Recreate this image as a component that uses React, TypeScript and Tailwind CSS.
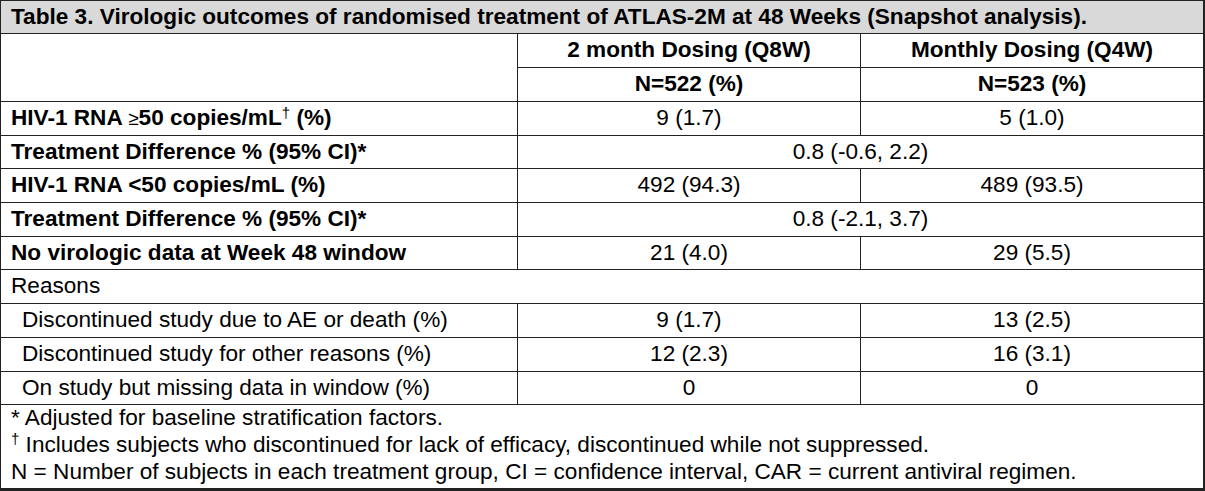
import React from "react";

const F = { fontFamily: '"Liberation Sans", Arial, Helvetica, sans-serif' };

function Dagger() {
  return <span className="inline-block text-[15px] leading-none relative -top-[7px] font-normal">†</span>;
}

function Row({
  h,
  label,
  bold,
  indent,
  a,
  b,
  merged,
}: {
  h: string;
  label: React.ReactNode;
  bold?: boolean;
  indent?: boolean;
  a?: string;
  b?: string;
  merged?: string;
}) {
  return (
    <div className={`flex ${h} shrink-0 border-b border-[#222]`}>
      <div
        className={`w-[517px] shrink-0 border-r border-[#222] flex items-center ${indent ? "pl-[21px]" : "pl-[10px]"} ${bold ? "font-bold" : ""}`}
      >
        {label}
      </div>
      {merged !== undefined ? (
        <div className="flex-1 flex items-center justify-center">{merged}</div>
      ) : (
        <>
          <div className="w-[343px] shrink-0 border-r border-[#222] flex items-center justify-center">
            {a}
          </div>
          <div className="flex-1 flex items-center justify-center">{b}</div>
        </>
      )}
    </div>
  );
}

export default function App() {
  return (
    <div
      style={F}
      className="w-[1205px] h-[491px] bg-white text-black text-[22.6px] leading-none border-t border-l border-r-2 border-b-[3px] border-[#222] flex flex-col box-border"
    >
      <div className="h-[33px] shrink-0 bg-[#d9d9d9] border-b border-[#222] flex items-center pl-[10px] font-bold whitespace-nowrap">
        Table 3. Virologic outcomes of randomised treatment of ATLAS-2M at 48 Weeks (Snapshot analysis).
      </div>
      <div className="flex h-[68px] shrink-0 border-b border-[#222]">
        <div className="w-[517px] shrink-0 border-r border-[#222]" />
        <div className="flex-1 flex flex-col font-bold">
          <div className="flex h-[34px] border-b border-[#222]">
            <div className="w-[343px] shrink-0 border-r border-[#222] flex items-center justify-center">
              2 month Dosing (Q8W)
            </div>
            <div className="flex-1 flex items-center justify-center">Monthly Dosing (Q4W)</div>
          </div>
          <div className="flex flex-1">
            <div className="w-[343px] shrink-0 border-r border-[#222] flex items-center justify-center">
              N=522 (%)
            </div>
            <div className="flex-1 flex items-center justify-center">N=523 (%)</div>
          </div>
        </div>
      </div>
      <Row
        h="h-[34px]"
        bold
        label={
          <span className="whitespace-nowrap">
            HIV-1 RNA <span className="font-normal text-[19px]">≥</span>50 copies/mL
            <Dagger /> (%)
          </span>
        }
        a="9 (1.7)"
        b="5 (1.0)"
      />
      <Row h="h-[33px]" bold label="Treatment Difference % (95% CI)*" merged="0.8 (-0.6, 2.2)" />
      <Row h="h-[34px]" bold label="HIV-1 RNA <50 copies/mL (%)" a="492 (94.3)" b="489 (93.5)" />
      <Row h="h-[34px]" bold label="Treatment Difference % (95% CI)*" merged="0.8 (-2.1, 3.7)" />
      <Row h="h-[33px]" bold label="No virologic data at Week 48 window" a="21 (4.0)" b="29 (5.5)" />
      <div className="h-[34px] shrink-0 border-b border-[#222] flex items-center pl-[10px]">Reasons</div>
      <Row h="h-[34px]" indent label="Discontinued study due to AE or death (%)" a="9 (1.7)" b="13 (2.5)" />
      <Row h="h-[34px]" indent label="Discontinued study for other reasons (%)" a="12 (2.3)" b="16 (3.1)" />
      <Row h="h-[33px]" indent label="On study but missing data in window (%)" a="0" b="0" />
      <div className="flex-1 flex flex-col pl-[10px] whitespace-nowrap">
        <div className="h-[27px] flex items-center">* Adjusted for baseline stratification factors.</div>
        <div className="h-[27px] flex items-center">
          <Dagger />
          <span>&nbsp;Includes subjects who discontinued for lack of efficacy, discontinued while not suppressed.</span>
        </div>
        <div className="h-[27px] flex items-center">
          N = Number of subjects in each treatment group, CI = confidence interval, CAR = current antiviral regimen.
        </div>
      </div>
    </div>
  );
}
